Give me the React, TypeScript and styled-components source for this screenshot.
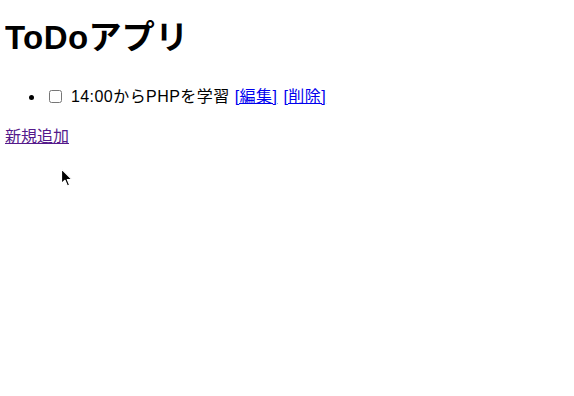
import styled, { createGlobalStyle } from "styled-components";

const GlobalStyle = createGlobalStyle`
  html, body {
    margin: 0;
    background: #ffffff;
  }
  body {
    padding: 0 5px;
    font-family: "Liberation Sans", "Noto Sans CJK JP", sans-serif;
    font-size: 16px;
    color: #000000;
  }
`;

const Page = styled.div`
  position: relative;
  height: 396px;
  overflow: hidden;
`;

const Title = styled.h1`
  margin: 18px 0 0;
  font-size: 33px;
  line-height: 40px;
  font-weight: 700;
  letter-spacing: 0.4px;
`;

const TodoList = styled.ul`
  margin: 27px 0 0;
  padding-left: 40px;
  list-style: disc;
`;

const TodoItem = styled.li`
  line-height: 24px;
  letter-spacing: 0.45px;
`;

const Check = styled.input`
  width: 13px;
  height: 13px;
  margin: 0 4px 0 4px;
  vertical-align: -1px;
`;

const ItemLink = styled.a<{ visited?: boolean }>`
  color: ${(props) => (props.visited ? "#551a8b" : "#0000ee")};
  text-decoration: underline;
  margin-left: ${(props) => (props.visited ? "0" : "5px")};
  & + & {
    margin-left: 6px;
  }
`;

const Footer = styled.p`
  margin: 16px 0 0;
  line-height: 24px;
`;

const Cursor = styled.svg`
  position: absolute;
  left: 55px;
  top: 168px;
`;

export default function App() {
  return (
    <Page>
      <GlobalStyle />
      <Title>ToDoアプリ</Title>
      <TodoList>
        <TodoItem>
          <Check type="checkbox" />
          {" "}14:00からPHPを学習
          <ItemLink href="#edit">[編集]</ItemLink>
          <ItemLink href="#delete">[削除]</ItemLink>
        </TodoItem>
      </TodoList>
      <Footer>
        <ItemLink href="#new" visited>
          新規追加
        </ItemLink>
      </Footer>
      <Cursor width="14" height="20" viewBox="0 0 14 20">
        <path
          d="M1.5 1 L1.5 15.5 L5 12.3 L7.4 18 L9.6 17.1 L7.3 11.6 L12 11.6 Z"
          fill="#000"
          stroke="#fff"
          strokeWidth="1.2"
          strokeLinejoin="round"
        />
      </Cursor>
    </Page>
  );
}
